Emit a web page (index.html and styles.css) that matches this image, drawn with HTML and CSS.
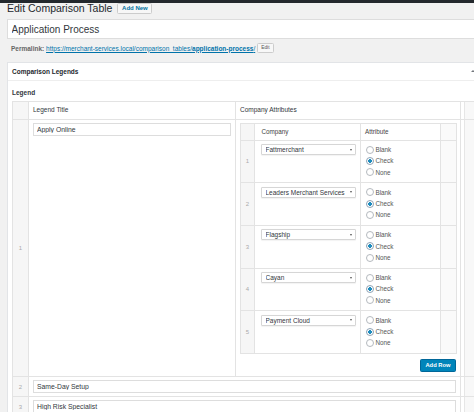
FILE: index.html
```html
<!DOCTYPE html>
<html lang="en">
<head>
<meta charset="utf-8">
<title>Edit Comparison Table</title>
<link rel="stylesheet" href="styles.css">
</head>
<body>
<div class="adminbar"></div>
<div class="wrap">
  <div class="page-head">
    <h1>Edit Comparison Table</h1>
    <a class="add-new" href="#">Add New</a>
  </div>

  <div class="title-box"><input class="title-input" type="text" value="Application Process"></div>

  <div class="permalink">
    <strong>Permalink:</strong>&nbsp;<a class="plink" href="#">https://merchant-services.local/comparison_tables/<b>application-process</b>/</a>
    <button class="edit-slug" type="button">Edit</button>
  </div>

  <div class="postbox">
    <div class="postbox-head">
      <h2>Comparison Legends</h2>
      <span class="toggle"></span>
    </div>
    <div class="inside">
      <div class="field-label">Legend</div>
      <table class="rep outer">
        <colgroup>
          <col class="o-handle"><col class="o-title"><col class="o-attrs"><col class="o-remove">
        </colgroup>
        <thead>
          <tr>
            <th class="handle"></th>
            <th>Legend Title</th>
            <th>Company Attributes</th>
            <th class="remove"></th>
          </tr>
        </thead>
        <tbody>
          <tr class="open">
            <td class="handle">1</td>
            <td class="cell"><input class="text" type="text" value="Apply Online"></td>
            <td class="cell attrs">
              <table class="rep inner">
                <colgroup>
                  <col class="i-handle"><col class="i-company"><col class="i-attr"><col class="i-remove">
                </colgroup>
                <thead>
                  <tr>
                    <th class="handle"></th>
                    <th class="th-company">Company</th>
                    <th class="th-attr">Attribute</th>
                    <th class="remove"></th>
                  </tr>
                </thead>
                <tbody>
                  <tr>
                    <td class="handle">1</td>
                    <td class="company"><span class="select"><select><option>Fattmerchant</option></select></span></td>
                    <td class="attr">
                      <ul class="radios">
                        <li><label><input type="radio" name="r1"> Blank</label></li>
                        <li><label><input type="radio" name="r1" checked> Check</label></li>
                        <li><label><input type="radio" name="r1"> None</label></li>
                      </ul>
                    </td>
                    <td class="remove"></td>
                  </tr>
                  <tr>
                    <td class="handle">2</td>
                    <td class="company"><span class="select"><select><option>Leaders Merchant Services</option></select></span></td>
                    <td class="attr">
                      <ul class="radios">
                        <li><label><input type="radio" name="r2"> Blank</label></li>
                        <li><label><input type="radio" name="r2" checked> Check</label></li>
                        <li><label><input type="radio" name="r2"> None</label></li>
                      </ul>
                    </td>
                    <td class="remove"></td>
                  </tr>
                  <tr>
                    <td class="handle">3</td>
                    <td class="company"><span class="select"><select><option>Flagship</option></select></span></td>
                    <td class="attr">
                      <ul class="radios">
                        <li><label><input type="radio" name="r3"> Blank</label></li>
                        <li><label><input type="radio" name="r3" checked> Check</label></li>
                        <li><label><input type="radio" name="r3"> None</label></li>
                      </ul>
                    </td>
                    <td class="remove"></td>
                  </tr>
                  <tr>
                    <td class="handle">4</td>
                    <td class="company"><span class="select"><select><option>Cayan</option></select></span></td>
                    <td class="attr">
                      <ul class="radios">
                        <li><label><input type="radio" name="r4"> Blank</label></li>
                        <li><label><input type="radio" name="r4" checked> Check</label></li>
                        <li><label><input type="radio" name="r4"> None</label></li>
                      </ul>
                    </td>
                    <td class="remove"></td>
                  </tr>
                  <tr>
                    <td class="handle">5</td>
                    <td class="company"><span class="select"><select><option>Payment Cloud</option></select></span></td>
                    <td class="attr">
                      <ul class="radios">
                        <li><label><input type="radio" name="r5"> Blank</label></li>
                        <li><label><input type="radio" name="r5" checked> Check</label></li>
                        <li><label><input type="radio" name="r5"> None</label></li>
                      </ul>
                    </td>
                    <td class="remove"></td>
                  </tr>
                </tbody>
              </table>
              <div class="actions"><button class="btn-primary" type="button">Add Row</button></div>
            </td>
            <td class="remove"></td>
          </tr>
          <tr class="collapsed">
            <td class="handle">2</td>
            <td class="cell" colspan="2"><input class="text" type="text" value="Same-Day Setup"></td>
            <td class="remove"></td>
          </tr>
          <tr class="collapsed">
            <td class="handle">3</td>
            <td class="cell" colspan="2"><input class="text" type="text" value="High Risk Specialist"></td>
            <td class="remove"></td>
          </tr>
        </tbody>
      </table>
    </div>
  </div>
</div>
</body>
</html>
```

FILE: styles.css
```css
* { box-sizing: border-box; }

html, body {
  margin: 0;
  padding: 0;
  width: 474px;
  height: 412px;
  overflow: hidden;
  background: #f1f1f1;
}

body {
  font-family: "Liberation Sans", Arial, sans-serif;
  font-size: 6.5px;
  color: #32373c;
}

.adminbar {
  height: 3px;
  background: #23282d;
}

.wrap {
  width: 520px;
  padding-left: 7px;
}

/* heading */
.page-head {
  display: flex;
  align-items: flex-start;
  gap: 5px;
  height: 10.5px;
  margin-bottom: 5px;
}

h1 {
  margin: 0;
  font-size: 10.5px;
  font-weight: 400;
  line-height: 10px;
  color: #23282d;
}

.add-new {
  display: flex;
  align-items: center;
  justify-content: center;
  width: 35px;
  height: 10.5px;
  border: 1px solid #ccc;
  border-radius: 1.5px;
  background: #f7f7f7;
  color: #0071a1;
  font-size: 6px;
  font-weight: 700;
  text-decoration: none;
}

/* title */
.title-box { height: 20px; }

.title-input {
  display: block;
  width: 100%;
  height: 20px;
  margin: 0;
  padding: 1px 3.5px 0;
  border: 1px solid #ddd;
  background: #fff;
  font-family: inherit;
  font-size: 10px;
  color: #32373c;
  outline: none;
}

/* permalink */
.permalink {
  display: flex;
  align-items: center;
  height: 11px;
  margin-top: 4px;
  padding-left: 4px;
  font-size: 6.5px;
  color: #666;
  white-space: nowrap;
}

.permalink strong { font-weight: 700; color: #666; }

.plink {
  color: #0073aa;
  text-decoration: underline;
}

.plink b { font-weight: 700; }

.edit-slug {
  margin: 0 0 0 2px;
  height: 9.5px;
  padding: 0 3px;
  border: 1px solid #ccc;
  border-radius: 1.5px;
  background: #f7f7f7;
  color: #555;
  font-family: inherit;
  font-size: 4.8px;
  line-height: 1;
}

/* postbox */
.postbox {
  margin-top: 8.5px;
  border: 1px solid #e2e4e7;
  background: #fff;
}

.postbox-head {
  position: relative;
  height: 18px;
  border-bottom: 1px solid #eee;
}

.postbox-head h2 {
  margin: 0;
  padding-left: 4px;
  font-size: 6.5px;
  font-weight: 700;
  line-height: 17px;
  color: #23282d;
}

.toggle {
  position: absolute;
  left: 463px;
  top: 7px;
  width: 0;
  height: 0;
  border-left: 2.5px solid transparent;
  border-right: 2.5px solid transparent;
  border-bottom: 2.5px solid #72777c;
}

.inside {
  padding: 0 4px;
}

.field-label {
  padding-top: 6.5px;
  height: 20px;
  font-size: 6.5px;
  font-weight: 700;
  line-height: 10px;
  color: #32373c;
}

/* repeater tables */
.rep {
  border-collapse: collapse;
  table-layout: fixed;
  background: #fff;
}

.rep th,
.rep td {
  border: 1px solid #e3e3e3;
  padding: 0;
  text-align: left;
  font-weight: 400;
  color: #32373c;
}

.rep .handle {
  background: #f6f6f6;
  color: #aaa;
  text-align: center;
  vertical-align: middle;
  font-size: 6px;
}

.outer { width: 488px; }
.o-handle { width: 16px; }
.o-title { width: 207px; }
.o-attrs { width: 225px; }
.o-remove { width: 40px; }

.outer > thead > tr > th {
  height: 17.5px;
  padding: 0 4px;
  font-size: 6.5px;
  line-height: 10px;
}

.outer > thead > tr > th.handle { padding: 0; }

.outer > tbody > tr > td.remove,
.outer > thead > tr > th.remove {
  background: #f8f8f8;
  box-shadow: inset 3px 0 0 #fff, inset 4px 0 0 #e6e6e6;
}

.outer .cell {
  vertical-align: top;
  padding: 3.5px 4px 4px;
}

.outer .attrs {
  padding: 3px 4px 4.5px;
}

.text {
  display: block;
  width: 100%;
  height: 12.5px;
  margin: 0;
  padding: 0 3px;
  border: 1px solid #ddd;
  background: #fff;
  font-family: inherit;
  font-size: 6.8px;
  color: #32373c;
  outline: none;
}

.collapsed .cell {
  padding: 2.5px 4px 3.5px;
}

.collapsed .text { height: 13px; }

/* inner table */
.inner { width: 216px; }
.i-handle { width: 14px; }
.i-company { width: 106px; }
.i-attr { width: 80px; }
.i-remove { width: 16px; }

.inner > thead > tr > th {
  height: 17px;
  font-size: 6.3px;
  line-height: 10px;
  color: #444;
}

.inner .th-company { padding-left: 6.5px; }
.inner .th-attr { padding-left: 4px; }

.inner > tbody > tr > td { height: 42.7px; }

.inner td.remove,
.inner th.remove { background: #fafafa; }

.inner .company {
  vertical-align: top;
  padding: 3.5px 4px 0 6px;
}

.select {
  position: relative;
  display: block;
  height: 11px;
}

.select::after {
  content: "";
  position: absolute;
  right: 4px;
  top: 4.5px;
  border-left: 1.6px solid transparent;
  border-right: 1.6px solid transparent;
  border-top: 2px solid #555;
  pointer-events: none;
}

.select select {
  -webkit-appearance: none;
  appearance: none;
  display: block;
  width: 100%;
  height: 11px;
  margin: 0;
  padding: 0 8px 0 3.5px;
  border: 1px solid #d6d6d6;
  border-radius: 1px;
  background: #fff;
  box-shadow: 0 0.5px 1px rgba(0, 0, 0, 0.05);
  font-family: inherit;
  font-size: 6.5px;
  line-height: 9px;
  color: #32373c;
  outline: none;
}

.inner .attr {
  vertical-align: top;
  padding: 3.5px 2px 0 5px;
}

.radios {
  list-style: none;
  margin: 0;
  padding: 0;
}

.radios li {
  height: 11.3px;
  line-height: 11.3px;
}

.radios label {
  display: flex;
  align-items: center;
  gap: 1.5px;
  height: 11.3px;
  font-size: 6.3px;
  color: #555;
}

.radios input {
  -webkit-appearance: none;
  appearance: none;
  flex: none;
  width: 8px;
  height: 8px;
  margin: 0;
  border: 1px solid #b4b9be;
  border-radius: 50%;
  background: #fff;
}

.radios input:checked {
  border-color: #8ea3b5;
  background: radial-gradient(circle, #1e8cbe 0 1.6px, #fff 2.1px);
}

.actions {
  display: flex;
  justify-content: flex-end;
  margin-top: 5px;
}

.btn-primary {
  height: 13px;
  width: 36px;
  margin: 0;
  padding: 0;
  border: 1px solid #006799;
  border-radius: 1.5px;
  background: #0085ba;
  color: #fff;
  font-family: inherit;
  font-size: 5.8px;
  font-weight: 700;
  line-height: 1;
}
```
